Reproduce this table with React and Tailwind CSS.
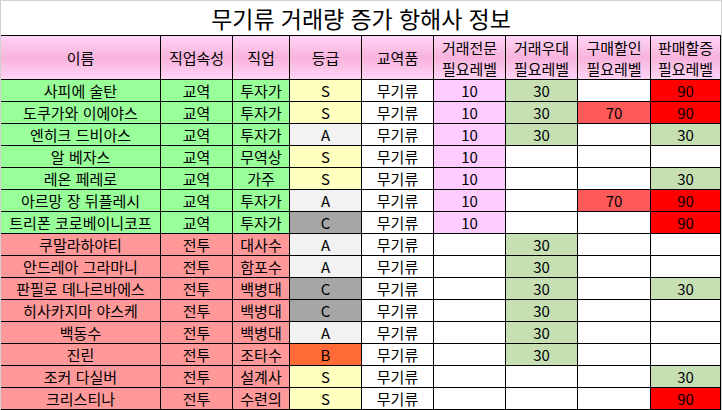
import React from "react";

const rows = [
  { name: "사피에 술탄", type: "교역", job: "투자가", grade: "S", a: "10", b: "30", c: "", d: "90" },
  { name: "도쿠가와 이에야스", type: "교역", job: "투자가", grade: "S", a: "10", b: "30", c: "70", d: "90" },
  { name: "엔히크 드비아스", type: "교역", job: "투자가", grade: "A", a: "10", b: "30", c: "", d: "30" },
  { name: "알 베자스", type: "교역", job: "무역상", grade: "S", a: "10", b: "", c: "", d: "" },
  { name: "레온 페레로", type: "교역", job: "가주", grade: "S", a: "10", b: "", c: "", d: "30" },
  { name: "아르망 장 뒤플레시", type: "교역", job: "투자가", grade: "A", a: "10", b: "", c: "70", d: "90" },
  { name: "트리폰 코로베이니코프", type: "교역", job: "투자가", grade: "C", a: "10", b: "", c: "", d: "90" },
  { name: "쿠말라하야티", type: "전투", job: "대사수", grade: "A", a: "", b: "30", c: "", d: "" },
  { name: "안드레아 그라마니", type: "전투", job: "함포수", grade: "A", a: "", b: "30", c: "", d: "" },
  { name: "판필로 데나르바에스", type: "전투", job: "백병대", grade: "C", a: "", b: "30", c: "", d: "30" },
  { name: "히사카지마 야스케", type: "전투", job: "백병대", grade: "C", a: "", b: "30", c: "", d: "" },
  { name: "백동수", type: "전투", job: "백병대", grade: "A", a: "", b: "30", c: "", d: "" },
  { name: "진린", type: "전투", job: "조타수", grade: "B", a: "", b: "30", c: "", d: "" },
  { name: "조커 다실버", type: "전투", job: "설계사", grade: "S", a: "", b: "", c: "", d: "30" },
  { name: "크리스티나", type: "전투", job: "수련의", grade: "S", a: "", b: "", c: "", d: "90" },
];

const gradeBg = {
  S: "bg-[#ffffc0]",
  A: "bg-[#f2f2f2]",
  B: "bg-[#ff6a35]",
  C: "bg-[#a6a6a6]",
};

const levelBg = {
  "10": "bg-[#ffccff]",
  "30": "bg-[#c6e0b4]",
  "70": "bg-[#ff5a5a]",
  "90": "bg-[#ff0000]",
};

const cell = "flex items-center justify-center border-r border-b border-black whitespace-nowrap overflow-hidden";
const cols = "grid grid-cols-[160px_72px_57px_72px_72px_72px_72px_73px_70px]";

const headers = [
  ["이름"],
  ["직업속성"],
  ["직업"],
  ["등급"],
  ["교역품"],
  ["거래전문", "필요레벨"],
  ["거래우대", "필요레벨"],
  ["구매할인", "필요레벨"],
  ["판매할증", "필요레벨"],
];

export default function App() {
  return (
    <div
      className="w-[722px] h-[410px] overflow-hidden bg-white border-t border-l border-r border-[#d0d0d0] text-black text-[15px] [word-spacing:1px]"
      style={{ fontFamily: '"Noto Sans CJK KR", "Noto Sans", sans-serif' }}
    >
      <div className="h-[34px] flex items-center justify-center text-[23px] leading-none">
        무기류 거래량 증가 항해사 정보
      </div>
      <div className="border-t border-black">
        <div className={`${cols} h-[44px]`}>
          {headers.map((h, i) => (
            <div
              key={i}
              className={`${cell} flex-col leading-[21px] bg-[linear-gradient(to_bottom,#ffd4f6,#f8b3dc_50%,#ffd4f6)]`}
            >
              {h.map((t) => (
                <span key={t}>{t}</span>
              ))}
            </div>
          ))}
        </div>
        {rows.map((r) => {
          const rowBg = r.type === "교역" ? "bg-[#99ff99]" : "bg-[#ff9999]";
          return (
            <div key={r.name} className={`${cols} h-[22px] leading-none`}>
              <div className={`${cell} ${rowBg}`}>{r.name}</div>
              <div className={`${cell} ${rowBg}`}>{r.type}</div>
              <div className={`${cell} ${rowBg}`}>{r.job}</div>
              <div className={`${cell} ${gradeBg[r.grade]}`}>{r.grade}</div>
              <div className={`${cell} bg-white`}>무기류</div>
              {[r.a, r.b, r.c, r.d].map((v, i) => (
                <div key={i} className={`${cell} ${v ? levelBg[v] : "bg-white"}`}>
                  {v}
                </div>
              ))}
            </div>
          );
        })}
      </div>
    </div>
  );
}
